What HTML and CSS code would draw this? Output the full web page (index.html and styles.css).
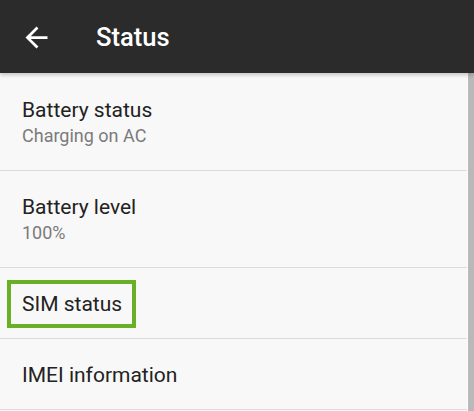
FILE: index.html
```html
<!DOCTYPE html>
<html>
<head>
<meta charset="utf-8">
<link rel="stylesheet" href="styles.css">
</head>
<body>
<div class="screen">
  <header class="toolbar">
    <svg class="back" viewBox="0 0 24 24" width="33" height="33"><path d="M20 11H7.83l5.59-5.59L12 4l-8 8 8 8 1.41-1.41L7.83 13H20v-2z" fill="#fff"/></svg>
    <h1 class="title">Status</h1>
  </header>
  <div class="body">
    <ul class="list">
      <li class="row two">
        <div class="primary">Battery status</div>
        <div class="secondary">Charging on AC</div>
      </li>
      <li class="row two">
        <div class="primary">Battery level</div>
        <div class="secondary">100%</div>
      </li>
      <li class="row one highlighted">
        <div class="primary">SIM status</div>
        <span class="mark"></span>
      </li>
      <li class="row one">
        <div class="primary">IMEI information</div>
      </li>
    </ul>
    <div class="edge"></div>
  </div>
</div>
</body>
</html>
```
FILE: styles.css
```css
html, body {
  margin: 0;
  padding: 0;
  background: #f8f8f8;
}
.screen {
  width: 474px;
  height: 411px;
  overflow: hidden;
  display: flex;
  flex-direction: column;
  font-family: Roboto, "Liberation Sans", sans-serif;
}
.toolbar {
  position: relative;
  z-index: 2;
  height: 73px;
  flex: none;
  background: #2b2b2b;
  display: flex;
  align-items: center;
  padding-left: 20px;
  box-shadow: 0 2px 4px rgba(0,0,0,0.22);
}
.back {
  display: block;
  margin-top: 2px;
}
.title {
  margin: 1px 0 0 43px;
  color: #fff;
  font-size: 25.6px;
  font-weight: 500;
  line-height: 30px;
}
.body {
  flex: 1;
  display: flex;
}
.list {
  flex: 1;
  list-style: none;
  margin: 0;
  padding: 1px 0 0 0;
  background: #f8f8f8;
  border-right: 1px solid #fdfdfd;
}
.row {
  position: relative;
  padding-left: 22px;
  border-bottom: 1px solid #dcdcdc;
  box-sizing: border-box;
}
.row.two {
  height: 97px;
  padding-top: 24px;
}
.row.one {
  height: 71px;
  padding-top: 24px;
}
.primary {
  font-size: 21px;
  line-height: 24px;
  color: #222;
}
.secondary {
  margin-top: 2px;
  font-size: 18px;
  line-height: 24px;
  color: #7b7b7b;
}
.mark {
  position: absolute;
  left: 7px;
  top: 12px;
  width: 129px;
  height: 48px;
  box-sizing: border-box;
  border: 4px solid #69b025;
}
.edge {
  width: 6px;
  flex: none;
  background: #b9b9b9;
}
```
